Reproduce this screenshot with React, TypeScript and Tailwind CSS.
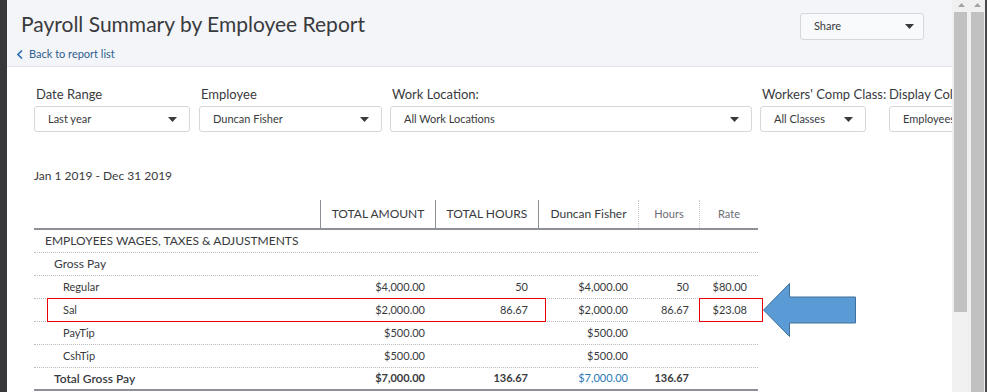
import React from 'react'

/* ─── Small pieces ─── */

function Caret({ className = '' }: { className?: string }) {
  return (
    <svg width="9" height="5" viewBox="0 0 9 5" className={className}>
      <path d="M0 0h9L4.5 5z" fill="#393a3d" />
    </svg>
  )
}

function Select({ value, width }: { value: string; width: string }) {
  return (
    <div
      className={`${width} h-[26px] flex items-center justify-between border border-[#d4d7dc] rounded-[3px] bg-white pl-[13px] pr-[12px] shrink-0`}
    >
      <span className="text-[11px] text-[#393a3d] whitespace-nowrap">{value}</span>
      <Caret />
    </div>
  )
}

function Filter({ label, value, width, extra = '' }: { label: string; value: string; width: string; extra?: string }) {
  return (
    <div className={`${width} ${extra} flex flex-col shrink-0`}>
      <span className="text-[13px] text-[#393a3d] pl-[2px] h-[21px] whitespace-nowrap leading-[19px]">{label}</span>
      <Select value={value} width={width} />
    </div>
  )
}

/* ─── Table data ─── */

type Row = {
  label: string
  indent: string
  cells: string[]
  bold?: boolean
  last?: boolean
  big?: boolean
}

const rows: Row[] = [
  { label: 'EMPLOYEES WAGES, TAXES & ADJUSTMENTS', indent: 'pl-[11px]', cells: ['', '', '', '', ''], big: true },
  { label: 'Gross Pay', indent: 'pl-[20px]', cells: ['', '', '', '', ''], big: true },
  { label: 'Regular', indent: 'pl-[29px]', cells: ['$4,000.00', '50', '$4,000.00', '50', '$80.00'] },
  { label: 'Sal', indent: 'pl-[29px]', cells: ['$2,000.00', '86.67', '$2,000.00', '86.67', '$23.08'] },
  { label: 'PayTip', indent: 'pl-[29px]', cells: ['$500.00', '', '$500.00', '', ''] },
  { label: 'CshTip', indent: 'pl-[29px]', cells: ['$500.00', '', '$500.00', '', ''] },
  { label: 'Total Gross Pay', indent: 'pl-[20px]', cells: ['$7,000.00', '136.67', '$7,000.00', '136.67', ''], bold: true, last: true },
]

const cols = 'grid grid-cols-[287px_115px_103px_100px_61px_58px]'

/* ─── Main ─── */

export default function App() {
  return (
    <div
      className="w-[987px] h-[392px] flex overflow-hidden bg-white text-[#393a3d]"
      style={{ fontFamily: 'Lato, "Open Sans", sans-serif' }}
    >
      {/* Left app edge */}
      <div className="w-[7px] shrink-0 bg-[#38383b]" />

      {/* Report area */}
      <div className="w-[945px] shrink-0 overflow-hidden flex flex-col">
        {/* Header */}
        <div className="h-[67px] shrink-0 bg-[#f4f5f8] border-b border-[#e3e5e8] flex justify-between">
          <div className="pl-[14px] pt-[10px]">
            <h1 className="text-[21px] leading-[28px] text-[#393a3d]">
              Payroll Summary by Employee Report
            </h1>
            <div className="flex items-center gap-[6px] mt-[8px] -ml-[4px]">
              <svg width="6" height="9" viewBox="0 0 6 9">
                <path d="M5 0.5L1 4.5l4 4" stroke="#2c6fb3" strokeWidth="1.6" fill="none" />
              </svg>
              <span className="text-[11px] text-[#2d5f8f]">Back to report list</span>
            </div>
          </div>
          <div className="pt-[13px] pr-[28px]">
            <div className="w-[124px] h-[27px] flex items-center justify-between border border-[#d4d7dc] rounded-[3px] bg-[#f8f9fa] pl-[13px] pr-[9px]">
              <span className="text-[11px] text-[#393a3d]">Share</span>
              <Caret />
            </div>
          </div>
        </div>

        {/* Filters */}
        <div className="flex pl-[27px] pt-[18px] gap-[8px]">
          <Filter label="Date Range" value="Last year" width="w-[156px]" />
          <Filter label="Employee" value="Duncan Fisher" width="w-[183px]" extra="ml-px" />
          <Filter label="Work Location:" value="All Work Locations" width="w-[362px]" />
          <Filter label="Workers' Comp Class:" value="All Classes" width="w-[106px]" />
          <div className="flex flex-col shrink-0 ml-[15px]">
            <span className="text-[13px] text-[#393a3d] h-[21px] leading-[19px] whitespace-nowrap">Display Columns By</span>
            <Select value="Employees" width="w-[110px]" />
          </div>
        </div>

        {/* Date */}
        <div className="pl-[27px] pt-[36px] text-[12px] leading-[16px]">Jan 1 2019 - Dec 31 2019</div>

        {/* Table */}
        <div className="relative ml-[27px] mt-[16px] w-[724px]">
          <div className={`${cols} h-[30px] border-b-2 border-[#8d9096] text-[12px]`}>
            <div className="border-r border-[#8d9096]" />
            <div className="flex items-center justify-center border-r border-[#8d9096]">TOTAL AMOUNT</div>
            <div className="flex items-center justify-center border-r border-[#8d9096]">TOTAL HOURS</div>
            <div className="flex items-center justify-center border-r border-dotted border-[#c4c6ca]">Duncan Fisher</div>
            <div className="flex items-center justify-center border-r border-dotted border-[#c4c6ca] text-[11px] text-[#6b6c72]">Hours</div>
            <div className="flex items-center justify-center text-[11px] text-[#6b6c72]">Rate</div>
          </div>

          {rows.map((r) => (
            <div
              key={r.label}
              className={`${cols} h-[23px] items-center text-[11px] ${
                r.last ? 'border-b-2 border-[#8d9096]' : 'border-b border-dotted border-[#b9bbbf]'
              }`}
            >
              <div className={`${r.indent} ${r.bold ? 'text-[12px] font-semibold' : ''} ${r.big ? 'text-[12px]' : ''}`}>
                {r.label}
              </div>
              {r.cells.map((c, i) => (
                <div
                  key={i}
                  className={`text-right pr-[11px] ${r.bold ? 'font-bold' : ''} ${
                    r.bold && i === 2 ? 'text-[#2a7ab8] font-normal' : ''
                  }`}
                >
                  {c}
                </div>
              ))}
            </div>
          ))}

          {/* Annotations */}
          <div className="absolute left-[13px] top-[98px] w-[499px] h-[24px] border border-[#e8000b]" />
          <div className="absolute left-[665px] top-[98px] w-[64px] h-[24px] border border-[#e8000b]" />
          <svg className="absolute left-[729px] top-[83px]" width="94" height="54" viewBox="0 0 94 54">
            <path
              d="M0.5 27L26.5 0.5V14H92.5V40H26.5V53.5Z"
              fill="#5b9bd5"
              stroke="#41719c"
              strokeWidth="1"
            />
          </svg>
        </div>
      </div>

      {/* Inner scrollbar */}
      <div className="w-[18px] shrink-0 bg-[#f0f0f0] flex flex-col items-center pt-[3px]">
        <svg width="7" height="4" viewBox="0 0 7 4">
          <path d="M0 4L3.5 0L7 4z" fill="#a3a3a3" />
        </svg>
        <div className="mt-[5px] w-[13px] h-[300px] bg-[#c1c1c1] -ml-[2px]" />
      </div>

      {/* Outer scrollbar */}
      <div className="w-[15px] shrink-0 bg-[#f0f0f0] flex flex-col items-center pt-[3px]">
        <svg width="7" height="4" viewBox="0 0 7 4">
          <path d="M0 4L3.5 0L7 4z" fill="#a3a3a3" />
        </svg>
        <div className="mt-[5px] w-[13px] flex-1 bg-[#c1c1c1]" />
      </div>
      <div className="w-[2px] shrink-0 bg-[#4a4a4d]" />
    </div>
  )
}
